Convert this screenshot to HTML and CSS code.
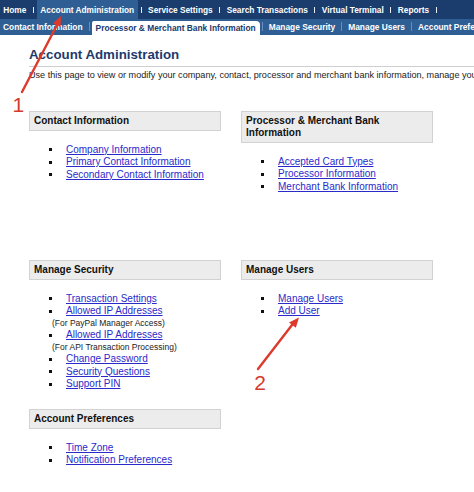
FILE: index.html
```html
<!DOCTYPE html>
<html lang="en">
<head>
<meta charset="utf-8">
<title>Account Administration</title>
<link rel="stylesheet" href="styles.css">
</head>
<body>
<nav class="topnav">
  <a class="tn-item tn-first" href="#">Home</a><span class="tn-sep"></span>
  <a class="tn-item tn-active" href="#">Account Administration</a><span class="tn-sep"></span>
  <a class="tn-item" href="#">Service Settings</a><span class="tn-sep"></span>
  <a class="tn-item" href="#">Search Transactions</a><span class="tn-sep"></span>
  <a class="tn-item" href="#">Virtual Terminal</a><span class="tn-sep"></span>
  <a class="tn-item" href="#">Reports</a><span class="tn-sep"></span>
</nav>
<nav class="subnav">
  <a class="sn-item sn-first" href="#">Contact Information</a><span class="sn-sep"></span>
  <a class="sn-item sn-active" href="#">Processor &amp; Merchant Bank Information</a><span class="sn-sep"></span>
  <a class="sn-item" href="#">Manage Security</a><span class="sn-sep"></span>
  <a class="sn-item" href="#">Manage Users</a><span class="sn-sep"></span>
  <a class="sn-item" href="#">Account Preferences</a>
</nav>
<main class="content">
  <h1 class="title">Account Administration</h1>
  <p class="intro">Use this page to view or modify your company, contact, processor and merchant bank information, manage your users and set account preferences.</p>
  <div class="sections">
    <section class="panel">
      <h2 class="panel-head">Contact Information</h2>
      <ul class="links">
        <li><a href="#">Company Information</a></li>
        <li><a href="#">Primary Contact Information</a></li>
        <li><a href="#">Secondary Contact Information</a></li>
      </ul>
    </section>
    <section class="panel">
      <h2 class="panel-head">Processor &amp; Merchant Bank Information</h2>
      <ul class="links">
        <li><a href="#">Accepted Card Types</a></li>
        <li><a href="#">Processor Information</a></li>
        <li><a href="#">Merchant Bank Information</a></li>
      </ul>
    </section>
    <section class="panel">
      <h2 class="panel-head">Manage Security</h2>
      <ul class="links">
        <li><a href="#">Transaction Settings</a></li>
        <li><a href="#">Allowed IP Addresses</a></li>
        <li class="note">(For PayPal Manager Access)</li>
        <li><a href="#">Allowed IP Addresses</a></li>
        <li class="note">(For API Transaction Processing)</li>
        <li><a href="#">Change Password</a></li>
        <li><a href="#">Security Questions</a></li>
        <li><a href="#">Support PIN</a></li>
      </ul>
    </section>
    <section class="panel">
      <h2 class="panel-head">Manage Users</h2>
      <ul class="links">
        <li><a href="#">Manage Users</a></li>
        <li><a href="#">Add User</a></li>
      </ul>
    </section>
    <section class="panel">
      <h2 class="panel-head">Account Preferences</h2>
      <ul class="links">
        <li><a href="#">Time Zone</a></li>
        <li><a href="#">Notification Preferences</a></li>
      </ul>
    </section>
  </div>
</main>
<svg class="annotations" width="474" height="492" viewBox="0 0 474 492" aria-hidden="true">
  <line x1="22" y1="92" x2="57" y2="25" stroke="#de3a2c" stroke-width="2.4" stroke-linecap="round"/>
  <polygon points="61,16 60.6,27.2 53,23.2" fill="#de3a2c"/>
  <text class="anno-num" x="12.5" y="112">1</text>
  <line x1="258" y1="369" x2="292" y2="325" stroke="#de3a2c" stroke-width="2.4" stroke-linecap="round"/>
  <polygon points="299,317.5 295.8,327.8 289,322.4" fill="#de3a2c"/>
  <text class="anno-num" x="254.2" y="390">2</text>
</svg>
</body>
</html>
```

FILE: styles.css
```css
html, body {
  margin: 0;
  padding: 0;
  overflow: hidden;
  background: #ffffff;
}

body {
  position: relative;
  width: 474px;
  height: 492px;
  font-family: "Liberation Sans", Arial, Helvetica, sans-serif;
  color: #222;
}

/* ---------- top navigation ---------- */
.topnav {
  display: flex;
  height: 19px;
  background: #1b3d6d;
  white-space: nowrap;
  overflow: hidden;
}

.tn-item {
  display: block;
  padding: 0 3.5px;
  font-size: 8.3px;
  font-weight: bold;
  line-height: 21px;
  color: #ffffff;
  text-decoration: none;
  flex: none;
}

.tn-first {
  padding-left: 3.3px;
}

.tn-active {
  background: #2e5e93;
}

.tn-sep {
  flex: none;
  align-self: flex-start;
  width: 1px;
  height: 6px;
  margin: 7px 3px 0;
  background: #e9eef5;
}

/* ---------- sub navigation ---------- */
.subnav {
  display: flex;
  height: 16px;
  background: #2f5e94;
  white-space: nowrap;
  overflow: hidden;
}

.sn-item {
  display: block;
  flex: none;
  padding: 0 4px;
  font-size: 8.4px;
  font-weight: bold;
  line-height: 17px;
  color: #ffffff;
  text-decoration: none;
}

.sn-first {
  padding-left: 3px;
}

.sn-active {
  margin-top: 2px;
  line-height: 14px;
  background: #ffffff;
  color: #1d3a6b;
  border-radius: 2px 4px 0 0;
}

.sn-sep {
  flex: none;
  align-self: flex-start;
  width: 1px;
  height: 9px;
  margin: 3px 2px 0;
  background: #6a8ebc;
}

/* ---------- content ---------- */
.content {
  width: 445px;
  padding-left: 29px;
}

.title {
  margin: 12px 0 0;
  padding-bottom: 3px;
  border-bottom: 1px solid #cfcfcf;
  font-size: 13.3px;
  line-height: 16px;
  font-weight: bold;
  color: #1d3a6b;
}

.intro {
  margin: 2px 0 0;
  font-size: 9.1px;
  line-height: 12px;
  color: #222;
  white-space: nowrap;
}

.sections {
  margin-top: 30px;
  display: grid;
  grid-template-columns: 192px 192px;
  grid-template-rows: 149px 149px auto;
  column-gap: 20px;
  align-items: start;
}

.panel-head {
  margin: 0;
  padding: 3px 4px;
  border: 1px solid #d2d2d2;
  background: #ececec;
  font-size: 10px;
  line-height: 12px;
  font-weight: bold;
  color: #111;
}

.links {
  list-style: none;
  margin: 12.5px 0 0;
  padding: 0;
}

.links li {
  display: flex;
  align-items: center;
  padding-left: 20px;
  font-size: 10px;
  line-height: 12.5px;
  white-space: nowrap;
}

.links li::before {
  content: "";
  flex: none;
  width: 3px;
  height: 3px;
  margin-right: 14px;
  background: #111;
}

.links li.note {
  padding-left: 23px;
  font-size: 8.5px;
  line-height: 11.5px;
  color: #222;
}

.links li.note::before {
  content: none;
}

.links a {
  color: #2a2acb;
  text-decoration: underline;
}

/* ---------- annotations ---------- */
.annotations {
  position: absolute;
  top: 0;
  left: 0;
  pointer-events: none;
}

.anno-num {
  font-family: "Liberation Sans", Arial, sans-serif;
  font-size: 21px;
  fill: #d63a2d;
}
```
